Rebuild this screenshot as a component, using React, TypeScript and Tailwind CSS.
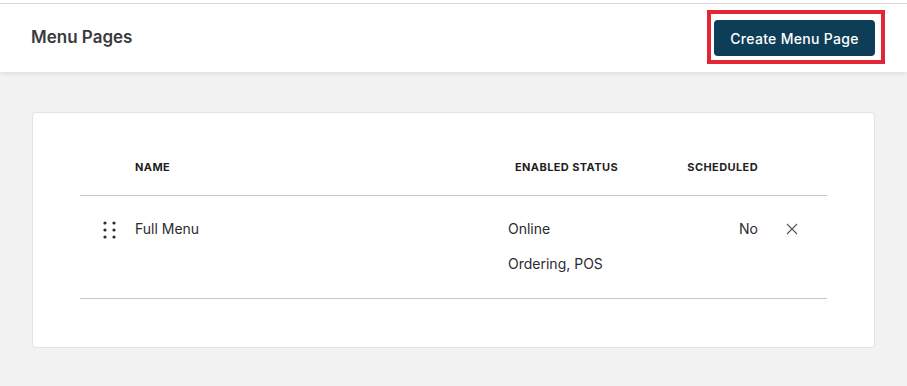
const font = { fontFamily: 'Inter, "Noto Sans", sans-serif' };

function DragHandle() {
  return (
    <svg width="16" height="20" viewBox="0 0 16 20" className="text-[#2b2b30]">
      {[3, 10, 17].map((y) => (
        <g key={y}>
          <circle cx="3" cy={y} r="1.6" fill="currentColor" />
          <circle cx="12" cy={y} r="1.6" fill="currentColor" />
        </g>
      ))}
    </svg>
  );
}

function CloseIcon() {
  return (
    <svg width="12" height="12" viewBox="0 0 12 12" className="text-[#555]">
      <path d="M1 1L11 11M11 1L1 11" stroke="currentColor" strokeWidth="1.1" />
    </svg>
  );
}

export default function App() {
  return (
    <div className="min-h-[386px] bg-[#f2f2f2] text-[#2b2b30]" style={font}>
      <header className="bg-white pt-[3px] shadow-[0_2px_4px_rgba(0,0,0,0.08)]">
        <div className="flex h-[69px] items-center justify-between border-t border-[#d6d6d6] pl-[31px] pr-[22px]">
          <h1 className="pb-[1px] text-[17px] font-semibold text-[#3a3a40]">Menu Pages</h1>
          <div className="-mt-[2px] border-[4px] border-[#e32636] pb-[4px] pl-[3px] pr-[6px] pt-[6px]">
            <button className="block h-[36px] w-[161px] rounded-[4px] bg-[#0d3d57] text-[14px] font-medium tracking-[0.3px] text-white">
              Create Menu Page
            </button>
          </div>
        </div>
      </header>

      <div className="px-[32px] pt-[40px]">
        <div className="rounded-[4px] border border-[#e2e2e2] bg-white px-[47px] pb-[48px] pt-[46px]">
          <div className="grid grid-cols-[55px_373px_178px_72px_1fr] border-b border-[#c8c8c8] pb-[20px] text-[11px] font-bold uppercase leading-[16px] tracking-[0.4px] text-[#1f1f23]">
            <div />
            <div>Name</div>
            <div className="pl-[7px]">Enabled Status</div>
            <div className="text-right">Scheduled</div>
            <div />
          </div>
          <div className="grid grid-cols-[55px_373px_178px_72px_1fr] border-b border-[#c8c8c8] pb-[24px] pt-[23px] text-[14px] leading-[20px] text-[#2b2b30]">
            <div className="pl-[22px] pt-[1px]">
              <DragHandle />
            </div>
            <div>Full Menu</div>
            <div className="flex flex-col gap-[15px]">
              <span>Online</span>
              <span>Ordering, POS</span>
            </div>
            <div className="text-right">No</div>
            <div className="pl-[28px] pt-[4px]">
              <CloseIcon />
            </div>
          </div>
        </div>
      </div>
    </div>
  );
}
